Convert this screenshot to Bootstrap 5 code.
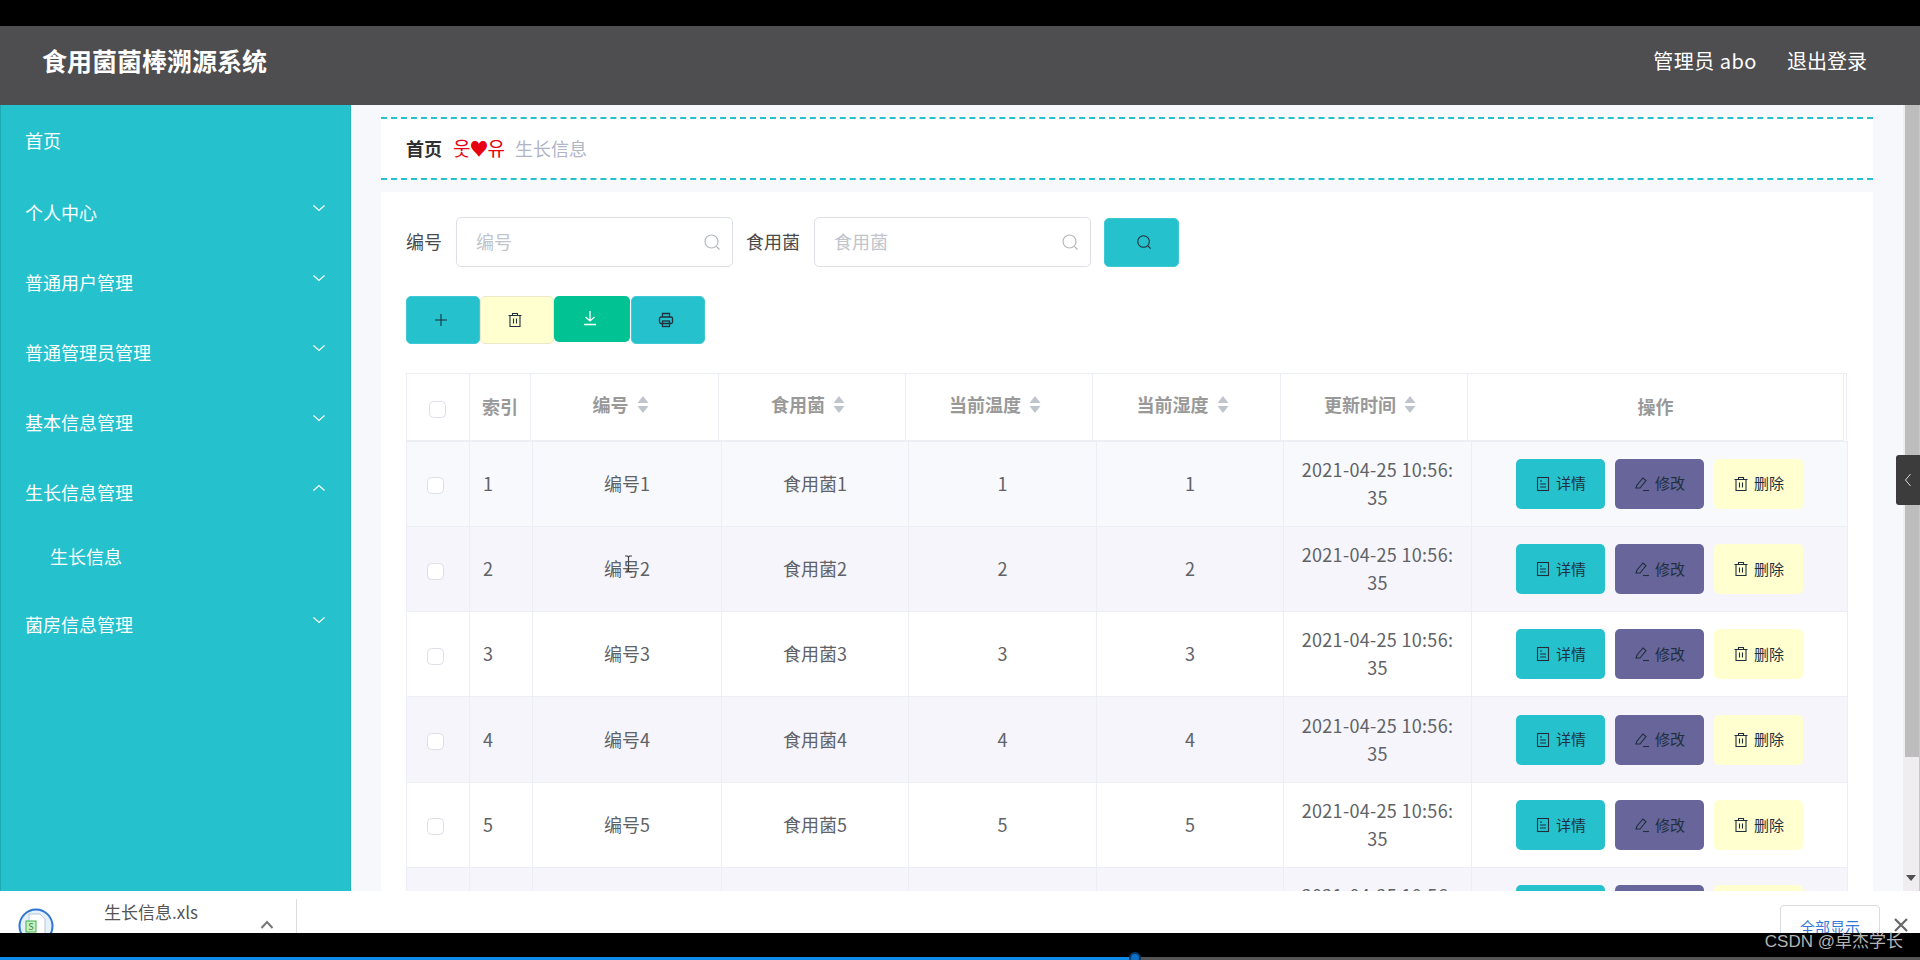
<!DOCTYPE html>
<html lang="zh-CN">
<head>
    <meta charset="UTF-8">
    <meta name="viewport" content="width=device-width, initial-scale=1.0">
    <title>食用菌菌棒溯源系统</title>
    <link href="https://cdn.jsdelivr.net/npm/bootstrap@5.3.0/dist/css/bootstrap.min.css" rel="stylesheet">
    <style>
        html, body { height: 100%; overflow: hidden; }
        body { background: #000; font-family: "Noto Sans CJK SC", sans-serif; font-size: 18px; color: #606266; }
        .top-strip { height: 26px; background: #000; flex: none; }
        .app-head { height: 79px; flex: none; background: #4e4d4f; color: #fff; padding: 0 53px 10px 42px; }
        .app-title { font-size: 25px; font-weight: 700; }
        .app-user { font-size: 20px; gap: 30px; }
        .app-user-name { letter-spacing: .5px; }
        .app-body { height: 786px; flex: none; overflow: hidden; background: #f7f8fc; }
        .side { width: 351px; flex: none; background: #25c2ce; color: #fff; padding-top: 1px; border-left: 1px solid #1fa9b4; border-right: 1px solid #21b4bf; }
        .side-item { height: 70px; padding: 0 24px 0 24px; }
        .side-item:first-child { height: 71px; padding-bottom: 2px; }
        .side-sub { height: 58px; padding-left: 49px; margin-bottom: 4px; }
        .side-arrow { width: 14px; height: 10px; margin-top: -8px; }
        .main-area { flex: 1 1 auto; min-width: 0; padding: 12px 30px 0 30px; }
        .crumb-box { height: 63px; background: #fff; border-top: 2px dashed #25c2ce; border-bottom: 2px dashed #25c2ce; padding-left: 25px; }
        .crumb-home { font-weight: 700; color: #303133; }
        .crumb-sep { color: #e60012; font-size: 19px; margin: 0 11px; letter-spacing: -1px; font-family: "Noto Sans CJK KR", sans-serif; }
        .crumb-now { color: #b0b5c6; }
        .list-box { margin-top: 12px; background: #fff; padding: 25px 26px 0 25px; height: 800px; }
        .find-label { color: #4a4a4a; margin-right: 14px; padding-bottom: 2px; }
        .find-label-next { margin-left: 13px; }
        .find-wrap { width: 277px; height: 50px; }
        .find-wrap .form-control { height: 50px; font-size: 18px; padding: 0 0 2px 19px; border: 1px solid #dcdfe6; border-radius: 5px; }
        .find-wrap .form-control::placeholder { color: #c0c4cc; }
        .find-icon { position: absolute; right: 12px; top: 16px; width: 18px; height: 18px; }
        .tool-row { margin-top: 29px; margin-bottom: 29px; }
        .act { display: inline-flex; align-items: center; justify-content: center; padding: 0; border-radius: 5px; border: 1px solid transparent; color: #1f2f3c; }
        .act:hover { color: #1f2f3c; }
        .act svg { width: 16px; height: 16px; flex: none; }
        .act-teal, .act-teal:hover { background: #25c2ce; border-color: #3fc9d4; }
        .act-yellow, .act-yellow:hover { background: #ffffd0; border-color: #ece9c8; }
        .act-green, .act-green:hover { background: #00c292; color: #fff; }
        .act-purple, .act-purple:hover { background: #67659a; border-color: #7775a5; }
        .act-search { width: 75px; height: 49px; margin-left: 13px; padding-left: 5px; }
        .act-tool { width: 74px; height: 48px; padding-right: 5px; }
        .act-tool.act-green { width: 76px; height: 46px; margin-right: 1px; padding-bottom: 2px; }
        .act-row { width: 89px; height: 50px; font-size: 15px; gap: 5px; border-width: 0; }
        .act-row-gap { gap: 10px; }
        .grid-table { table-layout: fixed; margin: 0; border-collapse: collapse; }
        .grid-table th, .grid-table td { border: 1px solid #ebeef5; padding: 0; vertical-align: middle; text-align: center; box-shadow: none; background: transparent; }
        .grid-head { width: 1437px; }
        .grid-head-wrap { width: 1441px; border-top: 1px solid #ebeef5; border-right: 1px solid #ebeef5; }
        .grid-head th { height: 66px; color: #999; font-weight: 700; font-size: 18px; border-top: 0; }
        .grid-head th.cell-check { padding-right: 2px; }
        .grid-body { width: 1441px; }
        .grid-body td { height: 85.3px; color: #606266; font-size: 18px; line-height: 28px; }
        .grid-body td:not(:last-child) { padding-bottom: 2px; }
        .grid-body td.cell-check { padding-right: 5px; }
        .grid-body td.cell-date { letter-spacing: .3px; }
        .grid-body tr.tint-a td { background: #f8f9fd; }
        .grid-body tr.tint-b td { background: #f5f5fb; }
        .grid-body td.cell-left { text-align: left; padding-left: 13px; }
        .grid-check { width: 17px; height: 17px; margin: 0; border: 1px solid #dcdfe6; border-radius: 3px; vertical-align: middle; }
        .sort-mark { display: inline-block; width: 12px; height: 17px; margin-left: 8px; vertical-align: -1px; }
        .head-up { position: relative; top: -2px; left: -4px; display: inline-block; }
        .scroll-side { width: 17px; flex: none; background: #efedef; border-right: 1px solid #c8c8c8; }
        .scroll-thumb { height: 652px; margin-left: 2px; background: #bdbdbd; }
        .scroll-arrow { width: 0; height: 0; margin: 118px auto 0; border: 5px solid transparent; border-top: 6px solid #505050; border-bottom: 0; }
        .side-handle { position: absolute; right: 0; top: 350px; width: 24px; height: 50px; background: #3c3c3c; border-radius: 3px 0 0 3px; }
        .side-handle svg { width: 8px; height: 14px; }
        .text-cursor { position: absolute; left: 624px; top: 450px; width: 9px; height: 18px; }
        .down-bar { height: 42px; flex: none; background: #fff; overflow: hidden; color: #555; }
        .down-icon { width: 36px; height: 36px; margin: 17px 0 0 18px; flex: none; }
        .down-name { width: 208px; padding: 9px 0 0 50px; font-size: 17px; line-height: 24px; flex: none; white-space: nowrap; }
        .down-up { width: 14px; height: 9px; margin: 29px 0 0 -2px; flex: none; }
        .down-line { width: 1px; height: 34px; margin: 8px 0 0 22px; background: #ddd; flex: none; }
        .down-all { width: 100px; height: 44px; margin-top: 14px; border: 1px solid #dadce0; border-radius: 4px; color: #3a76d8; font-size: 15px; padding: 0; }
        .down-close { width: 14px; height: 14px; margin: 27px 12px 0 14px; flex: none; }
        .shot-strip { height: 24px; flex: none; background: #000; color: #b4b4b4; font-family: "Liberation Sans", "Noto Sans CJK SC", sans-serif; font-size: 17px; line-height: 18px; padding-right: 17px; }
        .play-line { height: 3px; flex: none; background: #555; }
        .play-fill { width: 1135px; height: 3px; background: #0e8ae8; }
        .play-dot { position: absolute; left: 1129px; top: -5px; width: 12px; height: 12px; border-radius: 50%; background: #0e6fc4; border: 2px solid #063a66; }
    </style>
</head>
<body class="d-flex flex-column">

    <svg width="0" height="0" class="position-absolute">
        <symbol id="i-doc" viewBox="0 0 16 16"><g fill="none" stroke="currentColor" stroke-width="1.1"><rect x="2.5" y="1.5" width="11" height="13"/><path d="M5 5h2M5 8h6M5 11h6"/></g></symbol>
        <symbol id="i-pen" viewBox="0 0 16 16"><g fill="none" stroke="currentColor" stroke-width="1.1"><path d="M2 12l1-3 6-7 3 2.5-6 7.5z"/><path d="M9 14.5h6"/></g></symbol>
        <symbol id="i-bin" viewBox="0 0 16 16"><g fill="none" stroke="currentColor" stroke-width="1.1"><path d="M1.5 3.5h13M5.5 3.5V1.5h5v2M3 3.5V14.5h10V3.5"/><path d="M6.5 6.5v5M9.5 6.5v5"/></g></symbol>
        <symbol id="i-plus" viewBox="0 0 16 16"><path d="M8 2v12M2 8h12" fill="none" stroke="currentColor" stroke-width="1.1"/></symbol>
        <symbol id="i-down" viewBox="0 0 16 16"><path d="M8 1v10M3.5 7L8 11l4.500-4M2 14.500h12" fill="none" stroke="currentColor" stroke-width="1.3"/></symbol>
        <symbol id="i-print" viewBox="0 0 16 16"><g fill="none" stroke="currentColor" stroke-width="1.3"><path d="M4.500 5V1.500h7V5"/><rect x="1.500" y="5" width="13" height="6.500" rx="1.500"/><rect x="4.500" y="9" width="7" height="5.500"/></g></symbol>
        <symbol id="i-find" viewBox="0 0 18 18"><g fill="none" stroke="currentColor" stroke-width="1.2"><circle cx="8.500" cy="8.500" r="6.500"/><path d="M13.500 13.500l3 3"/></g></symbol>
        <symbol id="i-arrow" viewBox="0 0 14 10"><path d="M1.500 2.500L7 7.500l5.500-5" fill="none" stroke="currentColor" stroke-width="1.200"/></symbol>
        <symbol id="i-sort" viewBox="0 0 12 17"><path d="M6 0l5.500 7H.5zM6 17L.5 10h11z" fill="#c0c4cc"/></symbol>
    </svg>

    <div class="top-strip"></div>

    <header class="app-head d-flex align-items-center justify-content-between">
        <div class="app-title">食用菌菌棒溯源系统</div>
        <div class="app-user d-flex">
            <span class="app-user-name">管理员 abo</span>
            <span>退出登录</span>
        </div>
    </header>

    <div class="app-body d-flex position-relative">
        <nav class="side">
            <div class="side-item d-flex align-items-center">首页</div>
            <div class="side-item d-flex align-items-center justify-content-between">个人中心<svg class="side-arrow"><use href="#i-arrow"/></svg></div>
            <div class="side-item d-flex align-items-center justify-content-between">普通用户管理<svg class="side-arrow"><use href="#i-arrow"/></svg></div>
            <div class="side-item d-flex align-items-center justify-content-between">普通管理员管理<svg class="side-arrow"><use href="#i-arrow"/></svg></div>
            <div class="side-item d-flex align-items-center justify-content-between">基本信息管理<svg class="side-arrow"><use href="#i-arrow"/></svg></div>
            <div class="side-item d-flex align-items-center justify-content-between">生长信息管理<svg class="side-arrow" transform="scale(1 -1)"><use href="#i-arrow"/></svg></div>
            <div class="side-sub d-flex align-items-center">生长信息</div>
            <div class="side-item d-flex align-items-center justify-content-between">菌房信息管理<svg class="side-arrow"><use href="#i-arrow"/></svg></div>
        </nav>

        <main class="main-area">
            <div class="crumb-box d-flex align-items-center">
                <span class="crumb-home">首页</span>
                <span class="crumb-sep">웃♥유</span>
                <span class="crumb-now">生长信息</span>
            </div>

            <div class="list-box">
                <div class="d-flex align-items-center">
                    <span class="find-label">编号</span>
                    <div class="find-wrap position-relative">
                        <input type="text" class="form-control" placeholder="编号">
                        <svg class="find-icon text-secondary opacity-50"><use href="#i-find"/></svg>
                    </div>
                    <span class="find-label find-label-next">食用菌</span>
                    <div class="find-wrap position-relative">
                        <input type="text" class="form-control" placeholder="食用菌">
                        <svg class="find-icon text-secondary opacity-50"><use href="#i-find"/></svg>
                    </div>
                    <button class="btn act act-teal act-search"><svg><use href="#i-find"/></svg></button>
                </div>

                <div class="tool-row d-flex align-items-start">
                    <button class="btn act act-teal act-tool"><svg><use href="#i-plus"/></svg></button>
                    <button class="btn act act-yellow act-tool"><svg><use href="#i-bin"/></svg></button>
                    <button class="btn act act-green act-tool"><svg><use href="#i-down"/></svg></button>
                    <button class="btn act act-teal act-tool"><svg><use href="#i-print"/></svg></button>
                </div>

                <div class="grid-head-wrap">
                    <table class="table grid-table grid-head">
                        <colgroup><col width="63"><col width="61"><col width="188"><col width="187"><col width="187"><col width="188"><col width="187"><col width="376"></colgroup>
                        <thead>
                            <tr>
                                <th class="cell-check"><input type="checkbox" class="form-check-input grid-check"></th>
                                <th>索引</th>
                                <th><span class="head-up">编号<svg class="sort-mark"><use href="#i-sort"/></svg></span></th>
                                <th><span class="head-up">食用菌<svg class="sort-mark"><use href="#i-sort"/></svg></span></th>
                                <th><span class="head-up">当前温度<svg class="sort-mark"><use href="#i-sort"/></svg></span></th>
                                <th><span class="head-up">当前湿度<svg class="sort-mark"><use href="#i-sort"/></svg></span></th>
                                <th><span class="head-up">更新时间<svg class="sort-mark"><use href="#i-sort"/></svg></span></th>
                                <th>操作</th>
                            </tr>
                        </thead>
                    </table>
                </div>
                <table class="table grid-table grid-body">
                    <colgroup><col width="63"><col width="63"><col width="189"><col width="187"><col width="188"><col width="187"><col width="188"><col width="376"></colgroup>
                    <tbody id="gridRows"></tbody>
                </table>
            </div>
        </main>

        <div class="scroll-side">
            <div class="scroll-thumb"></div>
            <div class="scroll-arrow"></div>
        </div>

        <div class="side-handle d-flex align-items-center justify-content-center">
            <svg viewBox="0 0 8 14"><path d="M6.500 1L1.500 7l5 6" fill="none" stroke="#ddd" stroke-width="1"/></svg>
        </div>

        <svg class="text-cursor" viewBox="0 0 9 18"><path d="M1 1h2.500l1 1 1-1H8M4.500 2v14M1 17h2.500l1-1 1 1H8" fill="none" stroke="#444" stroke-width="1.200"/></svg>
    </div>

    <div class="down-bar d-flex">
        <svg class="down-icon" viewBox="0 0 36 36">
            <circle cx="18" cy="18" r="16.500" fill="#e6f0fb" stroke="#2f76d2" stroke-width="2"/>
            <path d="M11 6h11l5 5v20H11z" fill="#fff" stroke="#b9c6d6"/>
            <rect x="8" y="13" width="10" height="11" fill="#c9f0c4" stroke="#3fb24a"/>
            <text x="13" y="22" font-size="9" text-anchor="middle" fill="#2b8a36">S</text>
        </svg>
        <div class="down-name">生长信息.xls</div>
        <svg class="down-up" viewBox="0 0 14 9"><path d="M1.500 8L7 2l5.500 6" fill="none" stroke="#777" stroke-width="2"/></svg>
        <div class="down-line"></div>
        <div class="flex-grow-1"></div>
        <button class="btn down-all">全部显示</button>
        <svg class="down-close" viewBox="0 0 14 14"><path d="M1 1l12 12M13 1L1 13" stroke="#666" stroke-width="2.200"/></svg>
    </div>

    <div class="shot-strip text-end">CSDN @卓杰学长</div>

    <div class="play-line position-relative">
        <div class="play-fill"></div>
        <div class="play-dot"></div>
    </div>

    <script>
        // 表格数据
        let rows = "";
        for (let i = 1; i <= 6; i++) {
            let tint = i === 1 ? "tint-a" : (i % 2 === 0 ? "tint-b" : "");
            rows += `<tr class="${tint}">
                <td class="cell-check"><input type="checkbox" class="form-check-input grid-check"></td>
                <td class="cell-left">${i}</td>
                <td>编号${i}</td>
                <td>食用菌${i}</td>
                <td>${i}</td>
                <td>${i}</td>
                <td class="cell-date">2021-04-25 10:56:<br>35</td>
                <td>
                    <div class="d-flex justify-content-center act-row-gap">
                        <button class="btn act act-row act-teal"><svg><use href="#i-doc"/></svg>详情</button>
                        <button class="btn act act-row act-purple"><svg><use href="#i-pen"/></svg>修改</button>
                        <button class="btn act act-row act-yellow"><svg><use href="#i-bin"/></svg>删除</button>
                    </div>
                </td>
            </tr>`;
        }
        document.getElementById("gridRows").innerHTML = rows;
    </script>

</body>
</html>
